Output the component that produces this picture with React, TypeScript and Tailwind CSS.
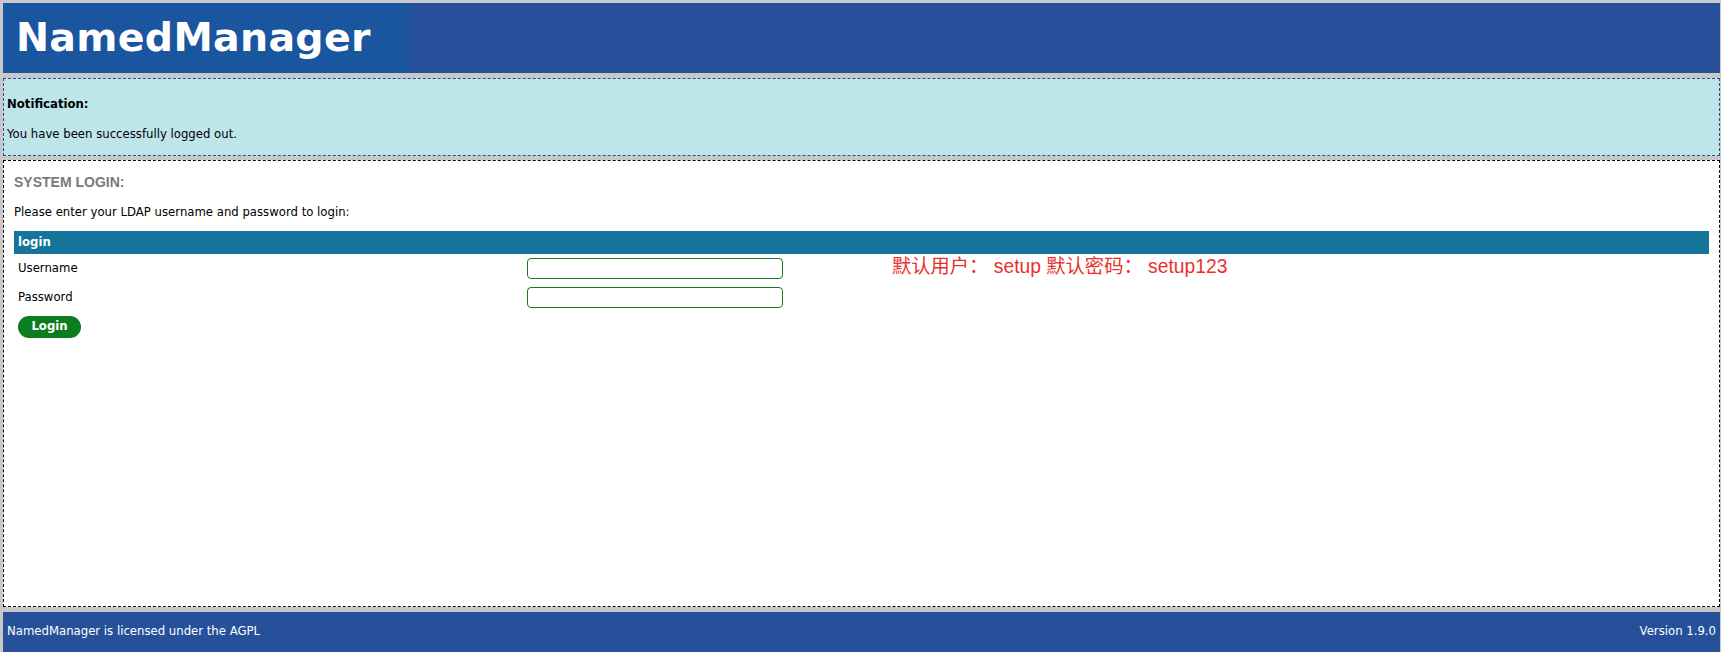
import React from 'react';

const body = { fontFamily: '"DejaVu Sans", Verdana, sans-serif' };

export default function App() {
  return (
    <div className="min-h-screen bg-[#c8c8c8] pl-[3px] pr-[1px] pt-[3px] text-black" style={body}>
      {/* Header */}
      <header className="flex h-[70px] bg-[#26509a]">
        <div className="flex w-[404px] items-center bg-[#1a55a0] pl-[13px]">
          <h1 className="text-[39.5px] font-bold leading-none tracking-[0.3px] text-white">NamedManager</h1>
        </div>
      </header>

      {/* Notification */}
      <section className="mt-[5px] h-[78px] border border-dashed border-[#2b4c8c] bg-[#bee5ea] px-[3px] text-[11.7px]">
        <p className="mt-[17px] font-bold leading-[16px]">Notification:</p>
        <p className="mt-[14px] leading-[16px]">You have been successfully logged out.</p>
      </section>

      {/* Login area */}
      <main className="mt-[4px] h-[447px] border border-dashed border-black bg-white px-[10px]">
        <h3
          className="mt-[13px] text-[14px] font-bold leading-[16px] text-[#7a7a7a]"
          style={{ fontFamily: '"Liberation Sans", Arial, sans-serif' }}
        >
          SYSTEM LOGIN:
        </h3>
        <p className="mt-[14px] text-[11.7px] leading-[16px]">Please enter your LDAP username and password to login:</p>

        <div className="mt-[11px]">
          <div className="flex h-[23px] items-center bg-[#16739a] px-[4px] text-[11.7px] font-bold text-white">login</div>

          <div className="flex h-[29px] items-center text-[11.7px]">
            <div className="w-[513px] pl-[4px]">Username</div>
            <input
              type="text"
              className="h-[21px] w-[256px] rounded-[4px] border-[1.5px] border-[#1e7a1e] bg-white outline-none"
            />
            <div
              className="mb-[3px] ml-[109px] text-[19.3px] leading-none text-[#e8302c]"
              style={{ fontFamily: '"Liberation Sans", "Noto Sans CJK SC", sans-serif' }}
            >
              默认用户： setup 默认密码： setup123
            </div>
          </div>

          <div className="flex h-[29px] items-center text-[11.7px]">
            <div className="w-[513px] pl-[4px]">Password</div>
            <input
              type="password"
              className="h-[21px] w-[256px] rounded-[4px] border-[1.5px] border-[#1e7a1e] bg-white outline-none"
            />
          </div>

          <div className="flex h-[30px] items-center pl-[4px]">
            <button className="h-[22px] w-[63px] rounded-full bg-[#0c7d1e] text-[11.7px] font-bold text-white">
              Login
            </button>
          </div>
        </div>
      </main>

      {/* Footer */}
      <footer className="mt-[5px] flex h-[40px] items-center justify-between bg-[#26509a] px-[4px] text-[11.7px] text-white">
        <span>NamedManager is licensed under the AGPL</span>
        <span>Version 1.9.0</span>
      </footer>
    </div>
  );
}
